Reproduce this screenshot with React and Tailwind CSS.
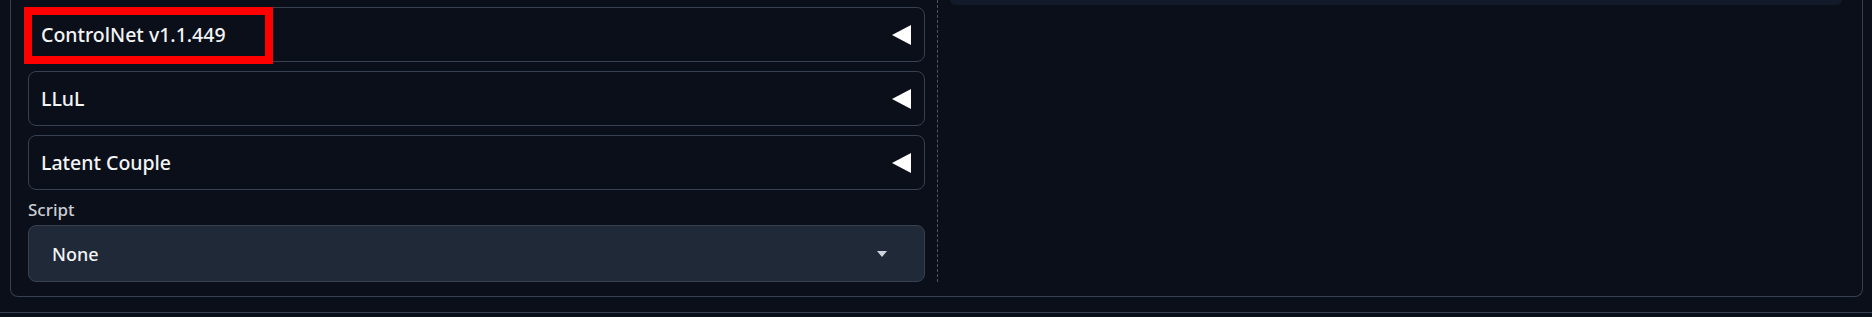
import React from 'react'

const SECTIONS = ['ControlNet v1.1.449', 'LLuL', 'Latent Couple']

function OpenArrow() {
  return (
    <svg width="19" height="20" viewBox="0 0 19 20" className="shrink-0">
      <polygon points="19,0 19,20 0,10" fill="#ffffff" />
    </svg>
  )
}

function Accordion({ title }) {
  return (
    <div className="h-[55px] rounded-lg border border-[#374151] bg-[#0b0f19] flex items-center justify-between pl-[12px] pr-[13px]">
      <span className="text-[19.5px] font-medium text-[#f3f4f6] leading-none">{title}</span>
      <OpenArrow />
    </div>
  )
}

export default function App() {
  return (
    <div className="relative h-[317px] w-[1872px] overflow-hidden bg-[#0b0f19] font-['Noto_Sans',sans-serif]">
      <div className="ml-[10px] mr-[9px] flex border-x border-b border-[#374151] rounded-b-lg pl-[17px] pr-[20px] pb-[14px]">
        {/* left column */}
        <div className="w-[897px] shrink-0 pt-[7px] flex flex-col">
          <div className="flex flex-col gap-[9px]">
            {SECTIONS.map(s => <Accordion key={s} title={s} />)}
          </div>
          <div className="mt-[9px] text-[17px] font-medium leading-[22px] text-[#c9cdd3]">Script</div>
          <div className="mt-[4px] h-[57px] rounded-lg border border-[#374151] bg-[#1f2937] flex items-center justify-between pl-[23px] pr-[37px]">
            <span className="text-[18px] font-medium text-[#f3f4f6] leading-none">None</span>
            <svg width="10" height="6" viewBox="0 0 10 6">
              <polygon points="0,0 10,0 5,6" fill="#d1d5db" />
            </svg>
          </div>
        </div>

        {/* right column */}
        <div className="ml-[12px] flex-1 border-l border-dashed border-[#4b5563] pl-[12px]">
          <div className="h-[5px] rounded-b-[6px] bg-[#131a29]" />
        </div>
      </div>

      <div className="mt-[15px] border-t border-[#374151]" />

      {/* annotation box */}
      <div className="absolute left-[24px] top-[7px] w-[249px] h-[57px] border-[8px] border-[#ff0000]" />
    </div>
  )
}
